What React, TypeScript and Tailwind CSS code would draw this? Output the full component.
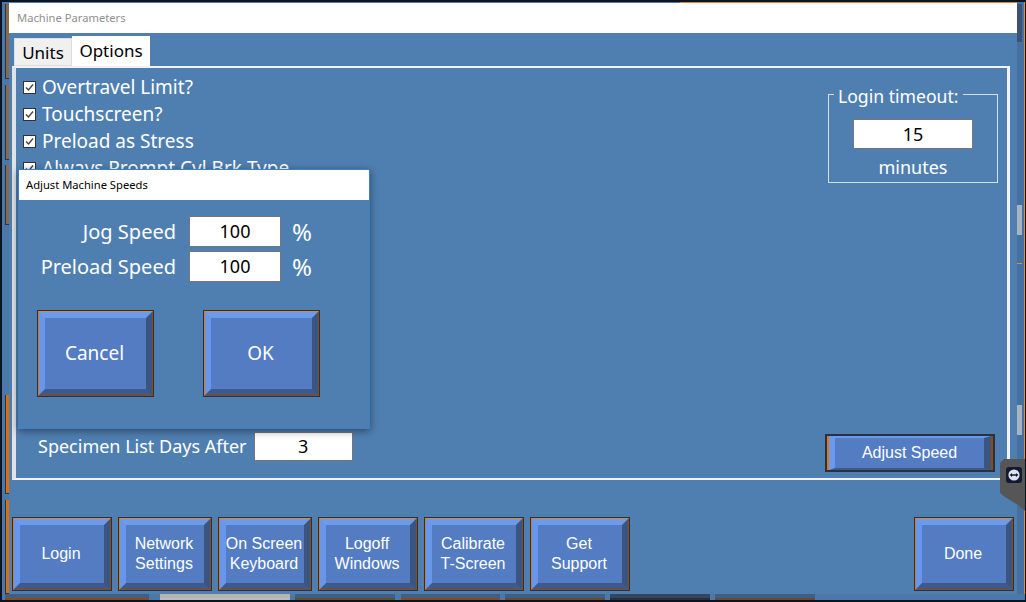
const tahoma = "font-['Noto_Sans',sans-serif]"
const arial = "font-['Liberation_Sans',Arial,sans-serif]"

function Bevel({ lines, className, font = arial }: { lines: string[]; className: string; font?: string }) {
  return (
    <button className={`shrink-0 border border-[#26323f] ${className}`}>
      <span className="block h-full border border-t-[#d88a2c] border-l-[#d9781c] border-r-[#8f4c12] border-b-[#8f4c12]">
        <span className={`flex h-full flex-col items-center justify-center border-[6px] border-t-[#6c9bee] border-l-[#6797ec] border-r-[#3b5480] border-b-[#40598c] bg-[#537cc3] pr-[2px] text-white ${font}`}>
          {lines.map(l => <span key={l} className="whitespace-nowrap">{l}</span>)}
        </span>
      </span>
    </button>
  )
}

function Check({ label }: { label: string }) {
  return (
    <div className="flex h-[27px] items-center">
      <span className="flex h-[13px] w-[13px] items-center justify-center border border-[#333] bg-white">
        <svg viewBox="0 0 11 11" className="h-[11px] w-[11px]">
          <path d="M2 5.5 L4.5 8 L9 2.5" fill="none" stroke="#444" strokeWidth="1.4" />
        </svg>
      </span>
      <span className="ml-[6px] text-[19px] leading-none text-white">{label}</span>
    </div>
  )
}

function Field({ value, className }: { value: string; className: string }) {
  return (
    <div className={`flex items-center justify-center border border-[#777] bg-white text-[18px] text-black ${className}`}>
      {value}
    </div>
  )
}

function SideTab({ className }: { className: string }) {
  return <div className={`w-[4px] border-l border-b border-[#2b3440] ${className}`} />
}

function BottomTab({ className }: { className: string }) {
  return <div className={`h-[6px] border-b-2 ${className}`} />
}

export default function App() {
  return (
    <div className={`relative flex h-[602px] w-[1026px] flex-col overflow-hidden border-t-2 border-b-2 border-l-2 border-r border-[#0b1420] bg-[#4a78a9] ${tahoma}`}>
      <div className="flex min-h-0 flex-1">
        <div className="flex w-[7px] shrink-0 flex-col pl-[3px] pt-[2px]">
          <SideTab className="h-[75px] bg-[#8a6a4a]" />
          <SideTab className="mt-[6px] h-[75px] bg-[#8a6a4a]" />
          <SideTab className="mt-[5px] h-[60px] bg-[#8a6a4a]" />
          <SideTab className="mt-[170px] h-[99px] bg-[#d9700f]" />
          <SideTab className="mt-[6px] h-[94px] bg-[#d9700f]" />
        </div>

        <main className="flex min-w-0 flex-1 flex-col bg-[#4f7fb1]">
          <div className="flex h-px justify-end">
            <div className="w-[337px] bg-[#d98a2b]" />
          </div>
          <div className="flex h-[30px] items-center bg-white pl-[8px] text-[11.2px] text-[#8f8f8f]">
            Machine Parameters
          </div>

          <div className="ml-[5px] mt-[3px] flex h-[30px] items-end">
            <div className="flex h-[28px] w-[58px] items-center justify-center border border-[#ddd] bg-[#f0f0f0] pt-[2px] text-[17px] text-black">Units</div>
            <div className="flex h-[30px] w-[78px] items-center justify-center bg-white text-[17px] text-black">Options</div>
          </div>

          <div className="ml-[3px] mr-[7px] flex h-[414px] flex-col justify-between border-2 border-l-[4px] border-r-[3px] border-l-[#dfe3e8] border-[#f2f2f2] pb-[6px] pl-[7px] pr-[12px]">
            <div className="flex justify-between pt-[6px]">
              <div>
                <Check label="Overtravel Limit?" />
                <Check label="Touchscreen?" />
                <Check label="Preload as Stress" />
                <Check label="Always Prompt Cyl Brk Type" />
              </div>
              <fieldset className="-mr-[3px] mt-[7px] h-[102px] w-[170px] border border-[#d5dfe9] px-0 text-white">
                <legend className="ml-[5px] translate-y-[2px] px-[4px] text-[17.6px] leading-[26px]">Login timeout:</legend>
                <Field value="15" className="mx-auto mt-[12px] h-[30px] w-[120px]" />
                <div className="mt-[5px] text-center text-[18px] leading-[26px]">minutes</div>
              </fieldset>
            </div>
            <div className="flex items-end justify-between">
              <div className="mb-[11px] ml-[15px] flex items-center text-white">
                <span className="text-[18px]">Specimen List Days After</span>
                <Field value="3" className="ml-[7px] h-[29px] w-[99px]" />
              </div>
              <button className="h-[38px] w-[170px] border-2 border-[#26323f]">
                <span className="block h-full border-l-2 border-r-2 border-l-[#d9781c] border-r-[#8f4c12]">
                  <span className={`flex h-full items-center justify-center border-y-2 border-l-[6px] border-r-[7px] border-t-[#6c9bee] border-b-[#40598c] border-l-[#6a9af0] border-r-[#3b5480] bg-[#537cc3] text-[16px] text-white ${arial}`}>
                    Adjust Speed
                  </span>
                </span>
              </button>
            </div>
          </div>

          <div className="mt-[37px] flex justify-between px-[3px]">
            <div className="flex gap-[6px]">
              <Bevel lines={["Login"]} className="h-[74px] w-[100px] text-[16px] leading-[20px]" />
              <Bevel lines={["Network", "Settings"]} className="h-[74px] w-[94px] text-[16px] leading-[20px]" />
              <Bevel lines={["On Screen", "Keyboard"]} className="h-[74px] w-[94px] text-[16px] leading-[20px]" />
              <Bevel lines={["Logoff", "Windows"]} className="h-[74px] w-[100px] text-[16px] leading-[20px]" />
              <Bevel lines={["Calibrate", "T-Screen"]} className="h-[74px] w-[100px] text-[16px] leading-[20px]" />
              <Bevel lines={["Get", "Support"]} className="h-[74px] w-[100px] text-[16px] leading-[20px]" />
            </div>
            <Bevel lines={["Done"]} className="h-[74px] w-[100px] text-[16px] leading-[20px]" />
          </div>
        </main>

        <div className="relative flex w-[8px] shrink-0 flex-col border-r border-[#f08c10] bg-[#46709f] pr-[2px]">
          <div className="mt-[2px] h-[38px] bg-[#3d5270]" />
          <div className="mt-[163px] h-[30px] bg-[#aab4bf]" />
          <div className="mt-[28px] h-px bg-[#f08c10]" />
          <div className="mt-[141px] h-[30px] bg-[#aab4bf]" />
        </div>
      </div>

      <div className="flex h-[6px] shrink-0 pl-[3px]">
        <BottomTab className="w-[144px] border-[#8a4a14] bg-[#3f5f86]" />
        <BottomTab className="ml-[11px] w-[130px] border-[#bbb] bg-[#b5b5b5]" />
        <BottomTab className="ml-[5px] w-[100px] border-[#6b4a2a] bg-[#3f5f86]" />
        <BottomTab className="ml-[6px] w-[99px] border-[#8a4a14] bg-[#3f5f86]" />
        <BottomTab className="ml-[5px] w-[100px] border-[#6b4a2a] bg-[#3f5f86]" />
        <BottomTab className="ml-[5px] w-[100px] border-[#26323f] bg-[#33465e]" />
        <BottomTab className="ml-[5px] w-[100px] border-[#6b4a2a] bg-[#3f5f86]" />
      </div>

      <section className="absolute left-[16px] top-[167px] w-[352px] border border-[#3b80cc] bg-[#4f7fb1] shadow-[0_2px_8px_rgba(0,0,0,0.45)]">
        <div className="flex h-[30px] items-center bg-white pl-[7px] text-[11.2px] text-black">Adjust Machine Speeds</div>
        <div className="px-[18px] pt-[14px] pb-[31px]">
          <div className="flex h-[35px] items-center text-white">
            <span className="w-[139px] text-right text-[20px]">Jog Speed</span>
            <Field value="100" className="ml-[13px] h-[31px] w-[92px]" />
            <span className="ml-[11px] text-[24px] leading-none">%</span>
          </div>
          <div className="flex h-[35px] items-center text-white">
            <span className="w-[139px] text-right text-[20px]">Preload Speed</span>
            <Field value="100" className="ml-[13px] h-[31px] w-[92px]" />
            <span className="ml-[11px] text-[24px] leading-none">%</span>
          </div>
          <div className="mt-[26px] flex gap-[49px]">
            <Bevel lines={["Cancel"]} font={tahoma} className="h-[87px] w-[117px] text-[19px]" />
            <Bevel lines={["OK"]} font={tahoma} className="h-[87px] w-[117px] text-[19px]" />
          </div>
        </div>
      </section>

      <div className="absolute right-0 top-[457px] h-[52px] w-[25px] bg-[#565656] [clip-path:polygon(4px_0,100%_0,100%_100%,18px_46px,5px_38px,0_34px,0_4px)]">
        <svg viewBox="0 0 16 16" className="ml-[6px] mt-[8px] h-[16px] w-[16px]">
          <rect width="16" height="16" rx="3" fill="#111a33" />
          <circle cx="8" cy="8" r="5.6" fill="#dfe3ea" />
          <path d="M3.6 8 L6 6 V7.3 H10 V6 L12.4 8 L10 10 V8.7 H6 V10 Z" fill="#111a33" />
        </svg>
      </div>
    </div>
  )
}
